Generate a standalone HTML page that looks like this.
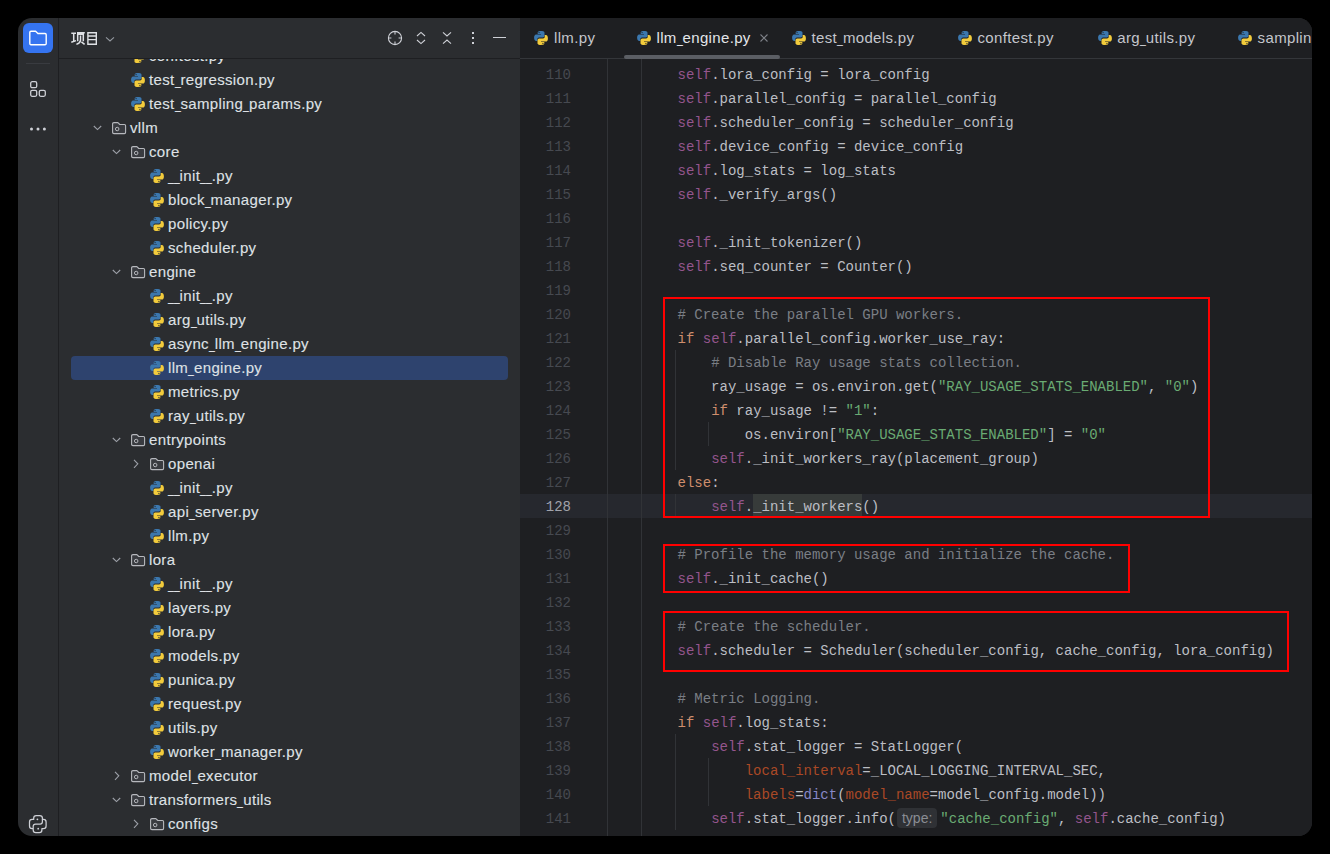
<!DOCTYPE html>
<html><head><meta charset="utf-8"><style>
html,body{margin:0;padding:0;background:#000;width:1330px;height:854px;overflow:hidden}
#win{position:absolute;left:0;top:0;width:1330px;height:854px;clip-path:inset(18px 18px 18px 18px round 14px);background:#2B2D30}
.abs{position:absolute}
.u{display:inline-block;width:5.8px;transform:scaleX(0.7);transform-origin:0 0}
.tt,.tab{letter-spacing:0.35px}
.tt{position:absolute;height:24px;-webkit-text-stroke:0.12px #DFE1E5;line-height:24px;font-family:"Liberation Sans",sans-serif;font-size:15px;color:#DFE1E5;white-space:pre}
.tab{position:absolute;top:18px;height:40px;line-height:40px;font-family:"Liberation Sans",sans-serif;font-size:15px;color:#C4C6CC;white-space:pre}
.tab.act{color:#E4E6EA}
.ln{position:absolute;left:520px;width:51px;text-align:right;height:24px;line-height:24px;padding-top:1px;box-sizing:border-box;font-family:"Liberation Mono",monospace;font-size:14px;color:#464950}
.ln.cur{color:#A1A3AB}
.cl{position:absolute;left:610.3px;height:24px;line-height:24px;padding-top:1px;box-sizing:border-box;font-family:"Liberation Mono",monospace;font-size:14px;color:#BCBEC4;white-space:pre}
.s{color:#94558D} .k{color:#CF8E6D} .g{color:#6AAB73} .c{color:#7A7E85} .n{color:#AA4926} .b{color:#8888C6}
.h{background:#373B3A;display:inline-block;height:24px;vertical-align:top;position:relative;top:-1px;padding-top:1px;box-sizing:border-box;line-height:24px}
.i{display:inline-block;font-family:"Liberation Sans",sans-serif;font-size:14px;color:#8A8D94;background:#2F3135;border-radius:4px;height:20px;line-height:20px;padding:0 5px;margin:0 3px 0 1px;vertical-align:top;margin-top:1px}
</style></head><body>
<div id="win">
  <!-- editor bg -->
  <div class="abs" style="left:520px;top:18px;width:792px;height:818px;background:#1E1F22"></div>
  <!-- tab border -->
  <div class="abs" style="left:520px;top:58px;width:792px;height:1px;background:#34363A"></div>
  <div class="abs" style="left:624px;top:55px;width:156px;height:4px;background:#5B5E64;border-radius:2px"></div>
  <svg width="14" height="14" viewBox="0.8 0.6 14.4 14.8" preserveAspectRatio="none" style="position:absolute;left:534px;top:31px"><path fill="#3B77AE" d="M7.9 0.6C4.4 0.6 4.6 2.1 4.6 2.1V3.7H8V4.2H3.3C3.3 4.2 0.9 3.9 0.9 7.6C0.9 11.3 3 11.2 3 11.2H4.2V9.4C4.2 9.4 4.1 7.4 6.2 7.4H9.6C9.6 7.4 11.6 7.4 11.6 5.5V2.4C11.6 2.4 11.9 0.6 7.9 0.6Z"/><circle cx="6" cy="2.3" r="0.6" fill="#1E1F22"/><path fill="#F2CB3C" d="M8.1 15.4C11.6 15.4 11.4 13.9 11.4 13.9V12.3H8V11.8H12.7C12.7 11.8 15.1 12.1 15.1 8.4C15.1 4.7 13 4.8 13 4.8H11.8V6.6C11.8 6.6 11.9 8.6 9.8 8.6H6.4C6.4 8.6 4.4 8.6 4.4 10.5V13.6C4.4 13.6 4.1 15.4 8.1 15.4Z"/><circle cx="10" cy="13.7" r="0.6" fill="#1E1F22"/></svg><div class="tab" style="left:554px">llm.py</div><svg width="14" height="14" viewBox="0.8 0.6 14.4 14.8" preserveAspectRatio="none" style="position:absolute;left:637px;top:31px"><path fill="#3B77AE" d="M7.9 0.6C4.4 0.6 4.6 2.1 4.6 2.1V3.7H8V4.2H3.3C3.3 4.2 0.9 3.9 0.9 7.6C0.9 11.3 3 11.2 3 11.2H4.2V9.4C4.2 9.4 4.1 7.4 6.2 7.4H9.6C9.6 7.4 11.6 7.4 11.6 5.5V2.4C11.6 2.4 11.9 0.6 7.9 0.6Z"/><circle cx="6" cy="2.3" r="0.6" fill="#1E1F22"/><path fill="#F2CB3C" d="M8.1 15.4C11.6 15.4 11.4 13.9 11.4 13.9V12.3H8V11.8H12.7C12.7 11.8 15.1 12.1 15.1 8.4C15.1 4.7 13 4.8 13 4.8H11.8V6.6C11.8 6.6 11.9 8.6 9.8 8.6H6.4C6.4 8.6 4.4 8.6 4.4 10.5V13.6C4.4 13.6 4.1 15.4 8.1 15.4Z"/><circle cx="10" cy="13.7" r="0.6" fill="#1E1F22"/></svg><div class="tab act" style="left:656.5px">llm<span class="u">_</span>engine.py</div><svg width="14" height="14" viewBox="0.8 0.6 14.4 14.8" preserveAspectRatio="none" style="position:absolute;left:792px;top:31px"><path fill="#3B77AE" d="M7.9 0.6C4.4 0.6 4.6 2.1 4.6 2.1V3.7H8V4.2H3.3C3.3 4.2 0.9 3.9 0.9 7.6C0.9 11.3 3 11.2 3 11.2H4.2V9.4C4.2 9.4 4.1 7.4 6.2 7.4H9.6C9.6 7.4 11.6 7.4 11.6 5.5V2.4C11.6 2.4 11.9 0.6 7.9 0.6Z"/><circle cx="6" cy="2.3" r="0.6" fill="#1E1F22"/><path fill="#F2CB3C" d="M8.1 15.4C11.6 15.4 11.4 13.9 11.4 13.9V12.3H8V11.8H12.7C12.7 11.8 15.1 12.1 15.1 8.4C15.1 4.7 13 4.8 13 4.8H11.8V6.6C11.8 6.6 11.9 8.6 9.8 8.6H6.4C6.4 8.6 4.4 8.6 4.4 10.5V13.6C4.4 13.6 4.1 15.4 8.1 15.4Z"/><circle cx="10" cy="13.7" r="0.6" fill="#1E1F22"/></svg><div class="tab" style="left:811.5px">test<span class="u">_</span>models.py</div><svg width="14" height="14" viewBox="0.8 0.6 14.4 14.8" preserveAspectRatio="none" style="position:absolute;left:958px;top:31px"><path fill="#3B77AE" d="M7.9 0.6C4.4 0.6 4.6 2.1 4.6 2.1V3.7H8V4.2H3.3C3.3 4.2 0.9 3.9 0.9 7.6C0.9 11.3 3 11.2 3 11.2H4.2V9.4C4.2 9.4 4.1 7.4 6.2 7.4H9.6C9.6 7.4 11.6 7.4 11.6 5.5V2.4C11.6 2.4 11.9 0.6 7.9 0.6Z"/><circle cx="6" cy="2.3" r="0.6" fill="#1E1F22"/><path fill="#F2CB3C" d="M8.1 15.4C11.6 15.4 11.4 13.9 11.4 13.9V12.3H8V11.8H12.7C12.7 11.8 15.1 12.1 15.1 8.4C15.1 4.7 13 4.8 13 4.8H11.8V6.6C11.8 6.6 11.9 8.6 9.8 8.6H6.4C6.4 8.6 4.4 8.6 4.4 10.5V13.6C4.4 13.6 4.1 15.4 8.1 15.4Z"/><circle cx="10" cy="13.7" r="0.6" fill="#1E1F22"/></svg><div class="tab" style="left:977.5px">conftest.py</div><svg width="14" height="14" viewBox="0.8 0.6 14.4 14.8" preserveAspectRatio="none" style="position:absolute;left:1098px;top:31px"><path fill="#3B77AE" d="M7.9 0.6C4.4 0.6 4.6 2.1 4.6 2.1V3.7H8V4.2H3.3C3.3 4.2 0.9 3.9 0.9 7.6C0.9 11.3 3 11.2 3 11.2H4.2V9.4C4.2 9.4 4.1 7.4 6.2 7.4H9.6C9.6 7.4 11.6 7.4 11.6 5.5V2.4C11.6 2.4 11.9 0.6 7.9 0.6Z"/><circle cx="6" cy="2.3" r="0.6" fill="#1E1F22"/><path fill="#F2CB3C" d="M8.1 15.4C11.6 15.4 11.4 13.9 11.4 13.9V12.3H8V11.8H12.7C12.7 11.8 15.1 12.1 15.1 8.4C15.1 4.7 13 4.8 13 4.8H11.8V6.6C11.8 6.6 11.9 8.6 9.8 8.6H6.4C6.4 8.6 4.4 8.6 4.4 10.5V13.6C4.4 13.6 4.1 15.4 8.1 15.4Z"/><circle cx="10" cy="13.7" r="0.6" fill="#1E1F22"/></svg><div class="tab" style="left:1117.3px">arg<span class="u">_</span>utils.py</div><svg width="14" height="14" viewBox="0.8 0.6 14.4 14.8" preserveAspectRatio="none" style="position:absolute;left:1238px;top:31px"><path fill="#3B77AE" d="M7.9 0.6C4.4 0.6 4.6 2.1 4.6 2.1V3.7H8V4.2H3.3C3.3 4.2 0.9 3.9 0.9 7.6C0.9 11.3 3 11.2 3 11.2H4.2V9.4C4.2 9.4 4.1 7.4 6.2 7.4H9.6C9.6 7.4 11.6 7.4 11.6 5.5V2.4C11.6 2.4 11.9 0.6 7.9 0.6Z"/><circle cx="6" cy="2.3" r="0.6" fill="#1E1F22"/><path fill="#F2CB3C" d="M8.1 15.4C11.6 15.4 11.4 13.9 11.4 13.9V12.3H8V11.8H12.7C12.7 11.8 15.1 12.1 15.1 8.4C15.1 4.7 13 4.8 13 4.8H11.8V6.6C11.8 6.6 11.9 8.6 9.8 8.6H6.4C6.4 8.6 4.4 8.6 4.4 10.5V13.6C4.4 13.6 4.1 15.4 8.1 15.4Z"/><circle cx="10" cy="13.7" r="0.6" fill="#1E1F22"/></svg><div class="tab" style="left:1257.6px">sampling<span class="u">_</span>params.py</div>
  <svg class="abs" style="left:759px;top:33px" width="10" height="10" viewBox="0 0 10 10"><path d="M1.5 1.5L8.5 8.5M8.5 1.5L1.5 8.5" stroke="#7C7F86" stroke-width="1.1"/></svg>
  <!-- current line -->
  <div class="abs" style="left:520px;top:494px;width:792px;height:24px;background:#26282E"></div>
  <!-- gutter sep -->
  <div class="abs" style="left:607px;top:59px;width:1px;height:777px;background:#313337"></div>
  <div class="abs" style="left:641px;top:59px;width:1px;height:777px;background:#313337"></div>
  <div class="abs" style="left:675px;top:350px;width:1px;height:120px;background:#313337"></div>
  <div class="abs" style="left:675px;top:494px;width:1px;height:24px;background:#313337"></div>
  <div class="abs" style="left:708px;top:422px;width:1px;height:24px;background:#313337"></div>
  <div class="abs" style="left:675px;top:734px;width:1px;height:96px;background:#313337"></div>
  <div class="abs" style="left:708px;top:758px;width:1px;height:48px;background:#313337"></div>
  <div class="ln" style="top:62px">110</div><div class="ln" style="top:86px">111</div><div class="ln" style="top:110px">112</div><div class="ln" style="top:134px">113</div><div class="ln" style="top:158px">114</div><div class="ln" style="top:182px">115</div><div class="ln" style="top:206px">116</div><div class="ln" style="top:230px">117</div><div class="ln" style="top:254px">118</div><div class="ln" style="top:278px">119</div><div class="ln" style="top:302px">120</div><div class="ln" style="top:326px">121</div><div class="ln" style="top:350px">122</div><div class="ln" style="top:374px">123</div><div class="ln" style="top:398px">124</div><div class="ln" style="top:422px">125</div><div class="ln" style="top:446px">126</div><div class="ln" style="top:470px">127</div><div class="ln cur" style="top:494px">128</div><div class="ln" style="top:518px">129</div><div class="ln" style="top:542px">130</div><div class="ln" style="top:566px">131</div><div class="ln" style="top:590px">132</div><div class="ln" style="top:614px">133</div><div class="ln" style="top:638px">134</div><div class="ln" style="top:662px">135</div><div class="ln" style="top:686px">136</div><div class="ln" style="top:710px">137</div><div class="ln" style="top:734px">138</div><div class="ln" style="top:758px">139</div><div class="ln" style="top:782px">140</div><div class="ln" style="top:806px">141</div>
  <div class="cl" style="top:62px">        <span class="s">self</span>.lora_config = lora_config</div><div class="cl" style="top:86px">        <span class="s">self</span>.parallel_config = parallel_config</div><div class="cl" style="top:110px">        <span class="s">self</span>.scheduler_config = scheduler_config</div><div class="cl" style="top:134px">        <span class="s">self</span>.device_config = device_config</div><div class="cl" style="top:158px">        <span class="s">self</span>.log_stats = log_stats</div><div class="cl" style="top:182px">        <span class="s">self</span>._verify_args()</div><div class="cl" style="top:230px">        <span class="s">self</span>._init_tokenizer()</div><div class="cl" style="top:254px">        <span class="s">self</span>.seq_counter = Counter()</div><div class="cl" style="top:302px">        <span class="c"># Create the parallel GPU workers.</span></div><div class="cl" style="top:326px">        <span class="k">if </span><span class="s">self</span>.parallel_config.worker_use_ray:</div><div class="cl" style="top:350px">            <span class="c"># Disable Ray usage stats collection.</span></div><div class="cl" style="top:374px">            ray_usage = os.environ.get(<span class="g">&quot;RAY_USAGE_STATS_ENABLED&quot;</span>, <span class="g">&quot;0&quot;</span>)</div><div class="cl" style="top:398px">            <span class="k">if</span> ray_usage != <span class="g">&quot;1&quot;</span>:</div><div class="cl" style="top:422px">                os.environ[<span class="g">&quot;RAY_USAGE_STATS_ENABLED&quot;</span>] = <span class="g">&quot;0&quot;</span></div><div class="cl" style="top:446px">            <span class="s">self</span>._init_workers_ray(placement_group)</div><div class="cl" style="top:470px">        <span class="k">else</span>:</div><div class="cl" style="top:494px">            <span class="s">self</span>.<span class="h">_init_workers</span>()</div><div class="cl" style="top:542px">        <span class="c"># Profile the memory usage and initialize the cache.</span></div><div class="cl" style="top:566px">        <span class="s">self</span>._init_cache()</div><div class="cl" style="top:614px">        <span class="c"># Create the scheduler.</span></div><div class="cl" style="top:638px">        <span class="s">self</span>.scheduler = Scheduler(scheduler_config, cache_config, lora_config)</div><div class="cl" style="top:686px">        <span class="c"># Metric Logging.</span></div><div class="cl" style="top:710px">        <span class="k">if </span><span class="s">self</span>.log_stats:</div><div class="cl" style="top:734px">            <span class="s">self</span>.stat_logger = StatLogger(</div><div class="cl" style="top:758px">                <span class="n">local_interval</span>=_LOCAL_LOGGING_INTERVAL_SEC,</div><div class="cl" style="top:782px">                <span class="n">labels</span>=<span class="b">dict</span>(<span class="n">model_name</span>=model_config.model))</div><div class="cl" style="top:806px">            <span class="s">self</span>.stat_logger.info(<span class="i">type:</span><span class="g">&quot;cache_config&quot;</span>, <span class="s">self</span>.cache_config)</div>
  <!-- red boxes -->
  <div class="abs" style="left:663px;top:297px;width:543px;height:217px;border:2px solid #FF0000"></div>
  <div class="abs" style="left:663px;top:544px;width:463px;height:45px;border:2px solid #FF0000"></div>
  <div class="abs" style="left:663px;top:611px;width:622px;height:57px;border:2px solid #FF0000"></div>

  <!-- left toolbar -->
  <div class="abs" style="left:58px;top:18px;width:1px;height:818px;background:#1E1F22"></div>
  <div class="abs" style="left:23px;top:23px;width:30px;height:30px;background:#3574F0;border-radius:6px"></div>
  <svg class="abs" style="left:28px;top:29px" width="20" height="18" viewBox="0 0 20 18"><path d="M1.8 3.4 Q1.8 2.2 3 2.2 H7.6 L9.9 4.5 H17 Q18.2 4.5 18.2 5.7 V14.6 Q18.2 15.8 17 15.8 H3 Q1.8 15.8 1.8 14.6 Z" fill="none" stroke="#FFFFFF" stroke-width="1.4" stroke-linejoin="round"/></svg>
  <div class="abs" style="left:26px;top:63px;width:24px;height:1px;background:#393B40"></div>
  <svg class="abs" style="left:29px;top:80px" width="18" height="18" viewBox="0 0 18 18"><g fill="none" stroke="#CED0D6" stroke-width="1.3"><rect x="1.7" y="1.7" width="6" height="6" rx="1.5"/><rect x="1.7" y="10.3" width="6" height="6" rx="1.5"/><rect x="10.3" y="10.3" width="6" height="6" rx="1.5"/></g></svg>
  <svg class="abs" style="left:28px;top:126px" width="20" height="6" viewBox="0 0 20 6"><g fill="#CED0D6"><circle cx="3.5" cy="3" r="1.5"/><circle cx="10" cy="3" r="1.5"/><circle cx="16.4" cy="3" r="1.5"/></g></svg>
  <svg class="abs" style="left:28px;top:814px" width="20" height="20" viewBox="0 0 20 20"><g fill="none" stroke="#CED0D6" stroke-width="1.25" stroke-linejoin="round"><path d="M8.2 1.5H11.8Q14.4 1.5 14.4 4.1V5.4H15.5Q18.1 5.4 18.1 8V12Q18.1 14.6 15.5 14.6H13.9V15.9Q13.9 18.5 11.3 18.5H7.8Q5.2 18.5 5.2 15.9V14.6H4.1Q1.5 14.6 1.5 12V8Q1.5 5.4 4.1 5.4H5.7V4.1Q5.7 1.5 8.2 1.5Z"/><path d="M5.2 14.6V12.3Q5.2 10 7.5 10H12.1Q14.4 10 14.4 7.7V5.4"/></g><circle cx="9.4" cy="5.3" r="0.9" fill="#CED0D6"/><circle cx="10.2" cy="14.7" r="0.9" fill="#CED0D6"/></svg>

  <!-- project panel -->
  <div class="abs" style="left:59px;top:59px;width:461px;height:777px;overflow:hidden">
    <div class="abs" style="left:-59px;top:-59px;width:520px;height:900px">
    <svg width="14" height="14" viewBox="0.8 0.6 14.4 14.8" preserveAspectRatio="none" style="position:absolute;left:131px;top:49px"><path fill="#3B77AE" d="M7.9 0.6C4.4 0.6 4.6 2.1 4.6 2.1V3.7H8V4.2H3.3C3.3 4.2 0.9 3.9 0.9 7.6C0.9 11.3 3 11.2 3 11.2H4.2V9.4C4.2 9.4 4.1 7.4 6.2 7.4H9.6C9.6 7.4 11.6 7.4 11.6 5.5V2.4C11.6 2.4 11.9 0.6 7.9 0.6Z"/><circle cx="6" cy="2.3" r="0.6" fill="#1E1F22"/><path fill="#F2CB3C" d="M8.1 15.4C11.6 15.4 11.4 13.9 11.4 13.9V12.3H8V11.8H12.7C12.7 11.8 15.1 12.1 15.1 8.4C15.1 4.7 13 4.8 13 4.8H11.8V6.6C11.8 6.6 11.9 8.6 9.8 8.6H6.4C6.4 8.6 4.4 8.6 4.4 10.5V13.6C4.4 13.6 4.1 15.4 8.1 15.4Z"/><circle cx="10" cy="13.7" r="0.6" fill="#1E1F22"/></svg><div class="tt" style="left:149px;top:44px">conftest.py</div><svg width="14" height="14" viewBox="0.8 0.6 14.4 14.8" preserveAspectRatio="none" style="position:absolute;left:131px;top:73px"><path fill="#3B77AE" d="M7.9 0.6C4.4 0.6 4.6 2.1 4.6 2.1V3.7H8V4.2H3.3C3.3 4.2 0.9 3.9 0.9 7.6C0.9 11.3 3 11.2 3 11.2H4.2V9.4C4.2 9.4 4.1 7.4 6.2 7.4H9.6C9.6 7.4 11.6 7.4 11.6 5.5V2.4C11.6 2.4 11.9 0.6 7.9 0.6Z"/><circle cx="6" cy="2.3" r="0.6" fill="#1E1F22"/><path fill="#F2CB3C" d="M8.1 15.4C11.6 15.4 11.4 13.9 11.4 13.9V12.3H8V11.8H12.7C12.7 11.8 15.1 12.1 15.1 8.4C15.1 4.7 13 4.8 13 4.8H11.8V6.6C11.8 6.6 11.9 8.6 9.8 8.6H6.4C6.4 8.6 4.4 8.6 4.4 10.5V13.6C4.4 13.6 4.1 15.4 8.1 15.4Z"/><circle cx="10" cy="13.7" r="0.6" fill="#1E1F22"/></svg><div class="tt" style="left:149px;top:68px">test<span class="u">_</span>regression.py</div><svg width="14" height="14" viewBox="0.8 0.6 14.4 14.8" preserveAspectRatio="none" style="position:absolute;left:131px;top:97px"><path fill="#3B77AE" d="M7.9 0.6C4.4 0.6 4.6 2.1 4.6 2.1V3.7H8V4.2H3.3C3.3 4.2 0.9 3.9 0.9 7.6C0.9 11.3 3 11.2 3 11.2H4.2V9.4C4.2 9.4 4.1 7.4 6.2 7.4H9.6C9.6 7.4 11.6 7.4 11.6 5.5V2.4C11.6 2.4 11.9 0.6 7.9 0.6Z"/><circle cx="6" cy="2.3" r="0.6" fill="#1E1F22"/><path fill="#F2CB3C" d="M8.1 15.4C11.6 15.4 11.4 13.9 11.4 13.9V12.3H8V11.8H12.7C12.7 11.8 15.1 12.1 15.1 8.4C15.1 4.7 13 4.8 13 4.8H11.8V6.6C11.8 6.6 11.9 8.6 9.8 8.6H6.4C6.4 8.6 4.4 8.6 4.4 10.5V13.6C4.4 13.6 4.1 15.4 8.1 15.4Z"/><circle cx="10" cy="13.7" r="0.6" fill="#1E1F22"/></svg><div class="tt" style="left:149px;top:92px">test<span class="u">_</span>sampling<span class="u">_</span>params.py</div><svg width="10" height="6" viewBox="0 0 10 6" style="position:absolute;left:93px;top:125px"><path d="M0.8 1 L4.5 4.6 L8.2 1" fill="none" stroke="#9DA0A8" stroke-width="1.1"/></svg><svg width="15" height="13" viewBox="0 0 15 13" style="position:absolute;left:112px;top:122px"><path d="M0.6 2 Q0.6 0.6 2 0.6 H5.9 L7.8 2.5 H12.4 Q13.6 2.5 13.6 3.7 V10.3 Q13.6 11.6 12.4 11.6 H2 Q0.6 11.6 0.6 10.3 Z" fill="#393B40" stroke="#B6B8BD" stroke-width="1.1" stroke-linejoin="round"/><circle cx="5.2" cy="7" r="1.75" fill="none" stroke="#B6B8BD" stroke-width="1"/></svg><div class="tt" style="left:130px;top:116px">vllm</div><svg width="10" height="6" viewBox="0 0 10 6" style="position:absolute;left:112px;top:149px"><path d="M0.8 1 L4.5 4.6 L8.2 1" fill="none" stroke="#9DA0A8" stroke-width="1.1"/></svg><svg width="15" height="13" viewBox="0 0 15 13" style="position:absolute;left:131px;top:146px"><path d="M0.6 2 Q0.6 0.6 2 0.6 H5.9 L7.8 2.5 H12.4 Q13.6 2.5 13.6 3.7 V10.3 Q13.6 11.6 12.4 11.6 H2 Q0.6 11.6 0.6 10.3 Z" fill="#393B40" stroke="#B6B8BD" stroke-width="1.1" stroke-linejoin="round"/><circle cx="5.2" cy="7" r="1.75" fill="none" stroke="#B6B8BD" stroke-width="1"/></svg><div class="tt" style="left:149px;top:140px">core</div><svg width="14" height="14" viewBox="0.8 0.6 14.4 14.8" preserveAspectRatio="none" style="position:absolute;left:150px;top:169px"><path fill="#3B77AE" d="M7.9 0.6C4.4 0.6 4.6 2.1 4.6 2.1V3.7H8V4.2H3.3C3.3 4.2 0.9 3.9 0.9 7.6C0.9 11.3 3 11.2 3 11.2H4.2V9.4C4.2 9.4 4.1 7.4 6.2 7.4H9.6C9.6 7.4 11.6 7.4 11.6 5.5V2.4C11.6 2.4 11.9 0.6 7.9 0.6Z"/><circle cx="6" cy="2.3" r="0.6" fill="#1E1F22"/><path fill="#F2CB3C" d="M8.1 15.4C11.6 15.4 11.4 13.9 11.4 13.9V12.3H8V11.8H12.7C12.7 11.8 15.1 12.1 15.1 8.4C15.1 4.7 13 4.8 13 4.8H11.8V6.6C11.8 6.6 11.9 8.6 9.8 8.6H6.4C6.4 8.6 4.4 8.6 4.4 10.5V13.6C4.4 13.6 4.1 15.4 8.1 15.4Z"/><circle cx="10" cy="13.7" r="0.6" fill="#1E1F22"/></svg><div class="tt" style="left:168px;top:164px"><span class="u">_</span><span class="u">_</span>init<span class="u">_</span><span class="u">_</span>.py</div><svg width="14" height="14" viewBox="0.8 0.6 14.4 14.8" preserveAspectRatio="none" style="position:absolute;left:150px;top:193px"><path fill="#3B77AE" d="M7.9 0.6C4.4 0.6 4.6 2.1 4.6 2.1V3.7H8V4.2H3.3C3.3 4.2 0.9 3.9 0.9 7.6C0.9 11.3 3 11.2 3 11.2H4.2V9.4C4.2 9.4 4.1 7.4 6.2 7.4H9.6C9.6 7.4 11.6 7.4 11.6 5.5V2.4C11.6 2.4 11.9 0.6 7.9 0.6Z"/><circle cx="6" cy="2.3" r="0.6" fill="#1E1F22"/><path fill="#F2CB3C" d="M8.1 15.4C11.6 15.4 11.4 13.9 11.4 13.9V12.3H8V11.8H12.7C12.7 11.8 15.1 12.1 15.1 8.4C15.1 4.7 13 4.8 13 4.8H11.8V6.6C11.8 6.6 11.9 8.6 9.8 8.6H6.4C6.4 8.6 4.4 8.6 4.4 10.5V13.6C4.4 13.6 4.1 15.4 8.1 15.4Z"/><circle cx="10" cy="13.7" r="0.6" fill="#1E1F22"/></svg><div class="tt" style="left:168px;top:188px">block<span class="u">_</span>manager.py</div><svg width="14" height="14" viewBox="0.8 0.6 14.4 14.8" preserveAspectRatio="none" style="position:absolute;left:150px;top:217px"><path fill="#3B77AE" d="M7.9 0.6C4.4 0.6 4.6 2.1 4.6 2.1V3.7H8V4.2H3.3C3.3 4.2 0.9 3.9 0.9 7.6C0.9 11.3 3 11.2 3 11.2H4.2V9.4C4.2 9.4 4.1 7.4 6.2 7.4H9.6C9.6 7.4 11.6 7.4 11.6 5.5V2.4C11.6 2.4 11.9 0.6 7.9 0.6Z"/><circle cx="6" cy="2.3" r="0.6" fill="#1E1F22"/><path fill="#F2CB3C" d="M8.1 15.4C11.6 15.4 11.4 13.9 11.4 13.9V12.3H8V11.8H12.7C12.7 11.8 15.1 12.1 15.1 8.4C15.1 4.7 13 4.8 13 4.8H11.8V6.6C11.8 6.6 11.9 8.6 9.8 8.6H6.4C6.4 8.6 4.4 8.6 4.4 10.5V13.6C4.4 13.6 4.1 15.4 8.1 15.4Z"/><circle cx="10" cy="13.7" r="0.6" fill="#1E1F22"/></svg><div class="tt" style="left:168px;top:212px">policy.py</div><svg width="14" height="14" viewBox="0.8 0.6 14.4 14.8" preserveAspectRatio="none" style="position:absolute;left:150px;top:241px"><path fill="#3B77AE" d="M7.9 0.6C4.4 0.6 4.6 2.1 4.6 2.1V3.7H8V4.2H3.3C3.3 4.2 0.9 3.9 0.9 7.6C0.9 11.3 3 11.2 3 11.2H4.2V9.4C4.2 9.4 4.1 7.4 6.2 7.4H9.6C9.6 7.4 11.6 7.4 11.6 5.5V2.4C11.6 2.4 11.9 0.6 7.9 0.6Z"/><circle cx="6" cy="2.3" r="0.6" fill="#1E1F22"/><path fill="#F2CB3C" d="M8.1 15.4C11.6 15.4 11.4 13.9 11.4 13.9V12.3H8V11.8H12.7C12.7 11.8 15.1 12.1 15.1 8.4C15.1 4.7 13 4.8 13 4.8H11.8V6.6C11.8 6.6 11.9 8.6 9.8 8.6H6.4C6.4 8.6 4.4 8.6 4.4 10.5V13.6C4.4 13.6 4.1 15.4 8.1 15.4Z"/><circle cx="10" cy="13.7" r="0.6" fill="#1E1F22"/></svg><div class="tt" style="left:168px;top:236px">scheduler.py</div><svg width="10" height="6" viewBox="0 0 10 6" style="position:absolute;left:112px;top:269px"><path d="M0.8 1 L4.5 4.6 L8.2 1" fill="none" stroke="#9DA0A8" stroke-width="1.1"/></svg><svg width="15" height="13" viewBox="0 0 15 13" style="position:absolute;left:131px;top:266px"><path d="M0.6 2 Q0.6 0.6 2 0.6 H5.9 L7.8 2.5 H12.4 Q13.6 2.5 13.6 3.7 V10.3 Q13.6 11.6 12.4 11.6 H2 Q0.6 11.6 0.6 10.3 Z" fill="#393B40" stroke="#B6B8BD" stroke-width="1.1" stroke-linejoin="round"/><circle cx="5.2" cy="7" r="1.75" fill="none" stroke="#B6B8BD" stroke-width="1"/></svg><div class="tt" style="left:149px;top:260px">engine</div><svg width="14" height="14" viewBox="0.8 0.6 14.4 14.8" preserveAspectRatio="none" style="position:absolute;left:150px;top:289px"><path fill="#3B77AE" d="M7.9 0.6C4.4 0.6 4.6 2.1 4.6 2.1V3.7H8V4.2H3.3C3.3 4.2 0.9 3.9 0.9 7.6C0.9 11.3 3 11.2 3 11.2H4.2V9.4C4.2 9.4 4.1 7.4 6.2 7.4H9.6C9.6 7.4 11.6 7.4 11.6 5.5V2.4C11.6 2.4 11.9 0.6 7.9 0.6Z"/><circle cx="6" cy="2.3" r="0.6" fill="#1E1F22"/><path fill="#F2CB3C" d="M8.1 15.4C11.6 15.4 11.4 13.9 11.4 13.9V12.3H8V11.8H12.7C12.7 11.8 15.1 12.1 15.1 8.4C15.1 4.7 13 4.8 13 4.8H11.8V6.6C11.8 6.6 11.9 8.6 9.8 8.6H6.4C6.4 8.6 4.4 8.6 4.4 10.5V13.6C4.4 13.6 4.1 15.4 8.1 15.4Z"/><circle cx="10" cy="13.7" r="0.6" fill="#1E1F22"/></svg><div class="tt" style="left:168px;top:284px"><span class="u">_</span><span class="u">_</span>init<span class="u">_</span><span class="u">_</span>.py</div><svg width="14" height="14" viewBox="0.8 0.6 14.4 14.8" preserveAspectRatio="none" style="position:absolute;left:150px;top:313px"><path fill="#3B77AE" d="M7.9 0.6C4.4 0.6 4.6 2.1 4.6 2.1V3.7H8V4.2H3.3C3.3 4.2 0.9 3.9 0.9 7.6C0.9 11.3 3 11.2 3 11.2H4.2V9.4C4.2 9.4 4.1 7.4 6.2 7.4H9.6C9.6 7.4 11.6 7.4 11.6 5.5V2.4C11.6 2.4 11.9 0.6 7.9 0.6Z"/><circle cx="6" cy="2.3" r="0.6" fill="#1E1F22"/><path fill="#F2CB3C" d="M8.1 15.4C11.6 15.4 11.4 13.9 11.4 13.9V12.3H8V11.8H12.7C12.7 11.8 15.1 12.1 15.1 8.4C15.1 4.7 13 4.8 13 4.8H11.8V6.6C11.8 6.6 11.9 8.6 9.8 8.6H6.4C6.4 8.6 4.4 8.6 4.4 10.5V13.6C4.4 13.6 4.1 15.4 8.1 15.4Z"/><circle cx="10" cy="13.7" r="0.6" fill="#1E1F22"/></svg><div class="tt" style="left:168px;top:308px">arg<span class="u">_</span>utils.py</div><svg width="14" height="14" viewBox="0.8 0.6 14.4 14.8" preserveAspectRatio="none" style="position:absolute;left:150px;top:337px"><path fill="#3B77AE" d="M7.9 0.6C4.4 0.6 4.6 2.1 4.6 2.1V3.7H8V4.2H3.3C3.3 4.2 0.9 3.9 0.9 7.6C0.9 11.3 3 11.2 3 11.2H4.2V9.4C4.2 9.4 4.1 7.4 6.2 7.4H9.6C9.6 7.4 11.6 7.4 11.6 5.5V2.4C11.6 2.4 11.9 0.6 7.9 0.6Z"/><circle cx="6" cy="2.3" r="0.6" fill="#1E1F22"/><path fill="#F2CB3C" d="M8.1 15.4C11.6 15.4 11.4 13.9 11.4 13.9V12.3H8V11.8H12.7C12.7 11.8 15.1 12.1 15.1 8.4C15.1 4.7 13 4.8 13 4.8H11.8V6.6C11.8 6.6 11.9 8.6 9.8 8.6H6.4C6.4 8.6 4.4 8.6 4.4 10.5V13.6C4.4 13.6 4.1 15.4 8.1 15.4Z"/><circle cx="10" cy="13.7" r="0.6" fill="#1E1F22"/></svg><div class="tt" style="left:168px;top:332px">async<span class="u">_</span>llm<span class="u">_</span>engine.py</div><div style="position:absolute;left:71px;top:356px;width:437px;height:24px;background:#2E436E;border-radius:4px"></div><svg width="14" height="14" viewBox="0.8 0.6 14.4 14.8" preserveAspectRatio="none" style="position:absolute;left:150px;top:361px"><path fill="#3B77AE" d="M7.9 0.6C4.4 0.6 4.6 2.1 4.6 2.1V3.7H8V4.2H3.3C3.3 4.2 0.9 3.9 0.9 7.6C0.9 11.3 3 11.2 3 11.2H4.2V9.4C4.2 9.4 4.1 7.4 6.2 7.4H9.6C9.6 7.4 11.6 7.4 11.6 5.5V2.4C11.6 2.4 11.9 0.6 7.9 0.6Z"/><circle cx="6" cy="2.3" r="0.6" fill="#1E1F22"/><path fill="#F2CB3C" d="M8.1 15.4C11.6 15.4 11.4 13.9 11.4 13.9V12.3H8V11.8H12.7C12.7 11.8 15.1 12.1 15.1 8.4C15.1 4.7 13 4.8 13 4.8H11.8V6.6C11.8 6.6 11.9 8.6 9.8 8.6H6.4C6.4 8.6 4.4 8.6 4.4 10.5V13.6C4.4 13.6 4.1 15.4 8.1 15.4Z"/><circle cx="10" cy="13.7" r="0.6" fill="#1E1F22"/></svg><div class="tt" style="left:168px;top:356px">llm<span class="u">_</span>engine.py</div><svg width="14" height="14" viewBox="0.8 0.6 14.4 14.8" preserveAspectRatio="none" style="position:absolute;left:150px;top:385px"><path fill="#3B77AE" d="M7.9 0.6C4.4 0.6 4.6 2.1 4.6 2.1V3.7H8V4.2H3.3C3.3 4.2 0.9 3.9 0.9 7.6C0.9 11.3 3 11.2 3 11.2H4.2V9.4C4.2 9.4 4.1 7.4 6.2 7.4H9.6C9.6 7.4 11.6 7.4 11.6 5.5V2.4C11.6 2.4 11.9 0.6 7.9 0.6Z"/><circle cx="6" cy="2.3" r="0.6" fill="#1E1F22"/><path fill="#F2CB3C" d="M8.1 15.4C11.6 15.4 11.4 13.9 11.4 13.9V12.3H8V11.8H12.7C12.7 11.8 15.1 12.1 15.1 8.4C15.1 4.7 13 4.8 13 4.8H11.8V6.6C11.8 6.6 11.9 8.6 9.8 8.6H6.4C6.4 8.6 4.4 8.6 4.4 10.5V13.6C4.4 13.6 4.1 15.4 8.1 15.4Z"/><circle cx="10" cy="13.7" r="0.6" fill="#1E1F22"/></svg><div class="tt" style="left:168px;top:380px">metrics.py</div><svg width="14" height="14" viewBox="0.8 0.6 14.4 14.8" preserveAspectRatio="none" style="position:absolute;left:150px;top:409px"><path fill="#3B77AE" d="M7.9 0.6C4.4 0.6 4.6 2.1 4.6 2.1V3.7H8V4.2H3.3C3.3 4.2 0.9 3.9 0.9 7.6C0.9 11.3 3 11.2 3 11.2H4.2V9.4C4.2 9.4 4.1 7.4 6.2 7.4H9.6C9.6 7.4 11.6 7.4 11.6 5.5V2.4C11.6 2.4 11.9 0.6 7.9 0.6Z"/><circle cx="6" cy="2.3" r="0.6" fill="#1E1F22"/><path fill="#F2CB3C" d="M8.1 15.4C11.6 15.4 11.4 13.9 11.4 13.9V12.3H8V11.8H12.7C12.7 11.8 15.1 12.1 15.1 8.4C15.1 4.7 13 4.8 13 4.8H11.8V6.6C11.8 6.6 11.9 8.6 9.8 8.6H6.4C6.4 8.6 4.4 8.6 4.4 10.5V13.6C4.4 13.6 4.1 15.4 8.1 15.4Z"/><circle cx="10" cy="13.7" r="0.6" fill="#1E1F22"/></svg><div class="tt" style="left:168px;top:404px">ray<span class="u">_</span>utils.py</div><svg width="10" height="6" viewBox="0 0 10 6" style="position:absolute;left:112px;top:437px"><path d="M0.8 1 L4.5 4.6 L8.2 1" fill="none" stroke="#9DA0A8" stroke-width="1.1"/></svg><svg width="15" height="13" viewBox="0 0 15 13" style="position:absolute;left:131px;top:434px"><path d="M0.6 2 Q0.6 0.6 2 0.6 H5.9 L7.8 2.5 H12.4 Q13.6 2.5 13.6 3.7 V10.3 Q13.6 11.6 12.4 11.6 H2 Q0.6 11.6 0.6 10.3 Z" fill="#393B40" stroke="#B6B8BD" stroke-width="1.1" stroke-linejoin="round"/><circle cx="5.2" cy="7" r="1.75" fill="none" stroke="#B6B8BD" stroke-width="1"/></svg><div class="tt" style="left:149px;top:428px">entrypoints</div><svg width="6" height="10" viewBox="0 0 6 10" style="position:absolute;left:132.5px;top:459px"><path d="M1 0.8 L4.8 4.8 L1 8.8" fill="none" stroke="#9DA0A8" stroke-width="1.1"/></svg><svg width="15" height="13" viewBox="0 0 15 13" style="position:absolute;left:150px;top:458px"><path d="M0.6 2 Q0.6 0.6 2 0.6 H5.9 L7.8 2.5 H12.4 Q13.6 2.5 13.6 3.7 V10.3 Q13.6 11.6 12.4 11.6 H2 Q0.6 11.6 0.6 10.3 Z" fill="#393B40" stroke="#B6B8BD" stroke-width="1.1" stroke-linejoin="round"/><circle cx="5.2" cy="7" r="1.75" fill="none" stroke="#B6B8BD" stroke-width="1"/></svg><div class="tt" style="left:168px;top:452px">openai</div><svg width="14" height="14" viewBox="0.8 0.6 14.4 14.8" preserveAspectRatio="none" style="position:absolute;left:150px;top:481px"><path fill="#3B77AE" d="M7.9 0.6C4.4 0.6 4.6 2.1 4.6 2.1V3.7H8V4.2H3.3C3.3 4.2 0.9 3.9 0.9 7.6C0.9 11.3 3 11.2 3 11.2H4.2V9.4C4.2 9.4 4.1 7.4 6.2 7.4H9.6C9.6 7.4 11.6 7.4 11.6 5.5V2.4C11.6 2.4 11.9 0.6 7.9 0.6Z"/><circle cx="6" cy="2.3" r="0.6" fill="#1E1F22"/><path fill="#F2CB3C" d="M8.1 15.4C11.6 15.4 11.4 13.9 11.4 13.9V12.3H8V11.8H12.7C12.7 11.8 15.1 12.1 15.1 8.4C15.1 4.7 13 4.8 13 4.8H11.8V6.6C11.8 6.6 11.9 8.6 9.8 8.6H6.4C6.4 8.6 4.4 8.6 4.4 10.5V13.6C4.4 13.6 4.1 15.4 8.1 15.4Z"/><circle cx="10" cy="13.7" r="0.6" fill="#1E1F22"/></svg><div class="tt" style="left:168px;top:476px"><span class="u">_</span><span class="u">_</span>init<span class="u">_</span><span class="u">_</span>.py</div><svg width="14" height="14" viewBox="0.8 0.6 14.4 14.8" preserveAspectRatio="none" style="position:absolute;left:150px;top:505px"><path fill="#3B77AE" d="M7.9 0.6C4.4 0.6 4.6 2.1 4.6 2.1V3.7H8V4.2H3.3C3.3 4.2 0.9 3.9 0.9 7.6C0.9 11.3 3 11.2 3 11.2H4.2V9.4C4.2 9.4 4.1 7.4 6.2 7.4H9.6C9.6 7.4 11.6 7.4 11.6 5.5V2.4C11.6 2.4 11.9 0.6 7.9 0.6Z"/><circle cx="6" cy="2.3" r="0.6" fill="#1E1F22"/><path fill="#F2CB3C" d="M8.1 15.4C11.6 15.4 11.4 13.9 11.4 13.9V12.3H8V11.8H12.7C12.7 11.8 15.1 12.1 15.1 8.4C15.1 4.7 13 4.8 13 4.8H11.8V6.6C11.8 6.6 11.9 8.6 9.8 8.6H6.4C6.4 8.6 4.4 8.6 4.4 10.5V13.6C4.4 13.6 4.1 15.4 8.1 15.4Z"/><circle cx="10" cy="13.7" r="0.6" fill="#1E1F22"/></svg><div class="tt" style="left:168px;top:500px">api<span class="u">_</span>server.py</div><svg width="14" height="14" viewBox="0.8 0.6 14.4 14.8" preserveAspectRatio="none" style="position:absolute;left:150px;top:529px"><path fill="#3B77AE" d="M7.9 0.6C4.4 0.6 4.6 2.1 4.6 2.1V3.7H8V4.2H3.3C3.3 4.2 0.9 3.9 0.9 7.6C0.9 11.3 3 11.2 3 11.2H4.2V9.4C4.2 9.4 4.1 7.4 6.2 7.4H9.6C9.6 7.4 11.6 7.4 11.6 5.5V2.4C11.6 2.4 11.9 0.6 7.9 0.6Z"/><circle cx="6" cy="2.3" r="0.6" fill="#1E1F22"/><path fill="#F2CB3C" d="M8.1 15.4C11.6 15.4 11.4 13.9 11.4 13.9V12.3H8V11.8H12.7C12.7 11.8 15.1 12.1 15.1 8.4C15.1 4.7 13 4.8 13 4.8H11.8V6.6C11.8 6.6 11.9 8.6 9.8 8.6H6.4C6.4 8.6 4.4 8.6 4.4 10.5V13.6C4.4 13.6 4.1 15.4 8.1 15.4Z"/><circle cx="10" cy="13.7" r="0.6" fill="#1E1F22"/></svg><div class="tt" style="left:168px;top:524px">llm.py</div><svg width="10" height="6" viewBox="0 0 10 6" style="position:absolute;left:112px;top:557px"><path d="M0.8 1 L4.5 4.6 L8.2 1" fill="none" stroke="#9DA0A8" stroke-width="1.1"/></svg><svg width="15" height="13" viewBox="0 0 15 13" style="position:absolute;left:131px;top:554px"><path d="M0.6 2 Q0.6 0.6 2 0.6 H5.9 L7.8 2.5 H12.4 Q13.6 2.5 13.6 3.7 V10.3 Q13.6 11.6 12.4 11.6 H2 Q0.6 11.6 0.6 10.3 Z" fill="#393B40" stroke="#B6B8BD" stroke-width="1.1" stroke-linejoin="round"/><circle cx="5.2" cy="7" r="1.75" fill="none" stroke="#B6B8BD" stroke-width="1"/></svg><div class="tt" style="left:149px;top:548px">lora</div><svg width="14" height="14" viewBox="0.8 0.6 14.4 14.8" preserveAspectRatio="none" style="position:absolute;left:150px;top:577px"><path fill="#3B77AE" d="M7.9 0.6C4.4 0.6 4.6 2.1 4.6 2.1V3.7H8V4.2H3.3C3.3 4.2 0.9 3.9 0.9 7.6C0.9 11.3 3 11.2 3 11.2H4.2V9.4C4.2 9.4 4.1 7.4 6.2 7.4H9.6C9.6 7.4 11.6 7.4 11.6 5.5V2.4C11.6 2.4 11.9 0.6 7.9 0.6Z"/><circle cx="6" cy="2.3" r="0.6" fill="#1E1F22"/><path fill="#F2CB3C" d="M8.1 15.4C11.6 15.4 11.4 13.9 11.4 13.9V12.3H8V11.8H12.7C12.7 11.8 15.1 12.1 15.1 8.4C15.1 4.7 13 4.8 13 4.8H11.8V6.6C11.8 6.6 11.9 8.6 9.8 8.6H6.4C6.4 8.6 4.4 8.6 4.4 10.5V13.6C4.4 13.6 4.1 15.4 8.1 15.4Z"/><circle cx="10" cy="13.7" r="0.6" fill="#1E1F22"/></svg><div class="tt" style="left:168px;top:572px"><span class="u">_</span><span class="u">_</span>init<span class="u">_</span><span class="u">_</span>.py</div><svg width="14" height="14" viewBox="0.8 0.6 14.4 14.8" preserveAspectRatio="none" style="position:absolute;left:150px;top:601px"><path fill="#3B77AE" d="M7.9 0.6C4.4 0.6 4.6 2.1 4.6 2.1V3.7H8V4.2H3.3C3.3 4.2 0.9 3.9 0.9 7.6C0.9 11.3 3 11.2 3 11.2H4.2V9.4C4.2 9.4 4.1 7.4 6.2 7.4H9.6C9.6 7.4 11.6 7.4 11.6 5.5V2.4C11.6 2.4 11.9 0.6 7.9 0.6Z"/><circle cx="6" cy="2.3" r="0.6" fill="#1E1F22"/><path fill="#F2CB3C" d="M8.1 15.4C11.6 15.4 11.4 13.9 11.4 13.9V12.3H8V11.8H12.7C12.7 11.8 15.1 12.1 15.1 8.4C15.1 4.7 13 4.8 13 4.8H11.8V6.6C11.8 6.6 11.9 8.6 9.8 8.6H6.4C6.4 8.6 4.4 8.6 4.4 10.5V13.6C4.4 13.6 4.1 15.4 8.1 15.4Z"/><circle cx="10" cy="13.7" r="0.6" fill="#1E1F22"/></svg><div class="tt" style="left:168px;top:596px">layers.py</div><svg width="14" height="14" viewBox="0.8 0.6 14.4 14.8" preserveAspectRatio="none" style="position:absolute;left:150px;top:625px"><path fill="#3B77AE" d="M7.9 0.6C4.4 0.6 4.6 2.1 4.6 2.1V3.7H8V4.2H3.3C3.3 4.2 0.9 3.9 0.9 7.6C0.9 11.3 3 11.2 3 11.2H4.2V9.4C4.2 9.4 4.1 7.4 6.2 7.4H9.6C9.6 7.4 11.6 7.4 11.6 5.5V2.4C11.6 2.4 11.9 0.6 7.9 0.6Z"/><circle cx="6" cy="2.3" r="0.6" fill="#1E1F22"/><path fill="#F2CB3C" d="M8.1 15.4C11.6 15.4 11.4 13.9 11.4 13.9V12.3H8V11.8H12.7C12.7 11.8 15.1 12.1 15.1 8.4C15.1 4.7 13 4.8 13 4.8H11.8V6.6C11.8 6.6 11.9 8.6 9.8 8.6H6.4C6.4 8.6 4.4 8.6 4.4 10.5V13.6C4.4 13.6 4.1 15.4 8.1 15.4Z"/><circle cx="10" cy="13.7" r="0.6" fill="#1E1F22"/></svg><div class="tt" style="left:168px;top:620px">lora.py</div><svg width="14" height="14" viewBox="0.8 0.6 14.4 14.8" preserveAspectRatio="none" style="position:absolute;left:150px;top:649px"><path fill="#3B77AE" d="M7.9 0.6C4.4 0.6 4.6 2.1 4.6 2.1V3.7H8V4.2H3.3C3.3 4.2 0.9 3.9 0.9 7.6C0.9 11.3 3 11.2 3 11.2H4.2V9.4C4.2 9.4 4.1 7.4 6.2 7.4H9.6C9.6 7.4 11.6 7.4 11.6 5.5V2.4C11.6 2.4 11.9 0.6 7.9 0.6Z"/><circle cx="6" cy="2.3" r="0.6" fill="#1E1F22"/><path fill="#F2CB3C" d="M8.1 15.4C11.6 15.4 11.4 13.9 11.4 13.9V12.3H8V11.8H12.7C12.7 11.8 15.1 12.1 15.1 8.4C15.1 4.7 13 4.8 13 4.8H11.8V6.6C11.8 6.6 11.9 8.6 9.8 8.6H6.4C6.4 8.6 4.4 8.6 4.4 10.5V13.6C4.4 13.6 4.1 15.4 8.1 15.4Z"/><circle cx="10" cy="13.7" r="0.6" fill="#1E1F22"/></svg><div class="tt" style="left:168px;top:644px">models.py</div><svg width="14" height="14" viewBox="0.8 0.6 14.4 14.8" preserveAspectRatio="none" style="position:absolute;left:150px;top:673px"><path fill="#3B77AE" d="M7.9 0.6C4.4 0.6 4.6 2.1 4.6 2.1V3.7H8V4.2H3.3C3.3 4.2 0.9 3.9 0.9 7.6C0.9 11.3 3 11.2 3 11.2H4.2V9.4C4.2 9.4 4.1 7.4 6.2 7.4H9.6C9.6 7.4 11.6 7.4 11.6 5.5V2.4C11.6 2.4 11.9 0.6 7.9 0.6Z"/><circle cx="6" cy="2.3" r="0.6" fill="#1E1F22"/><path fill="#F2CB3C" d="M8.1 15.4C11.6 15.4 11.4 13.9 11.4 13.9V12.3H8V11.8H12.7C12.7 11.8 15.1 12.1 15.1 8.4C15.1 4.7 13 4.8 13 4.8H11.8V6.6C11.8 6.6 11.9 8.6 9.8 8.6H6.4C6.4 8.6 4.4 8.6 4.4 10.5V13.6C4.4 13.6 4.1 15.4 8.1 15.4Z"/><circle cx="10" cy="13.7" r="0.6" fill="#1E1F22"/></svg><div class="tt" style="left:168px;top:668px">punica.py</div><svg width="14" height="14" viewBox="0.8 0.6 14.4 14.8" preserveAspectRatio="none" style="position:absolute;left:150px;top:697px"><path fill="#3B77AE" d="M7.9 0.6C4.4 0.6 4.6 2.1 4.6 2.1V3.7H8V4.2H3.3C3.3 4.2 0.9 3.9 0.9 7.6C0.9 11.3 3 11.2 3 11.2H4.2V9.4C4.2 9.4 4.1 7.4 6.2 7.4H9.6C9.6 7.4 11.6 7.4 11.6 5.5V2.4C11.6 2.4 11.9 0.6 7.9 0.6Z"/><circle cx="6" cy="2.3" r="0.6" fill="#1E1F22"/><path fill="#F2CB3C" d="M8.1 15.4C11.6 15.4 11.4 13.9 11.4 13.9V12.3H8V11.8H12.7C12.7 11.8 15.1 12.1 15.1 8.4C15.1 4.7 13 4.8 13 4.8H11.8V6.6C11.8 6.6 11.9 8.6 9.8 8.6H6.4C6.4 8.6 4.4 8.6 4.4 10.5V13.6C4.4 13.6 4.1 15.4 8.1 15.4Z"/><circle cx="10" cy="13.7" r="0.6" fill="#1E1F22"/></svg><div class="tt" style="left:168px;top:692px">request.py</div><svg width="14" height="14" viewBox="0.8 0.6 14.4 14.8" preserveAspectRatio="none" style="position:absolute;left:150px;top:721px"><path fill="#3B77AE" d="M7.9 0.6C4.4 0.6 4.6 2.1 4.6 2.1V3.7H8V4.2H3.3C3.3 4.2 0.9 3.9 0.9 7.6C0.9 11.3 3 11.2 3 11.2H4.2V9.4C4.2 9.4 4.1 7.4 6.2 7.4H9.6C9.6 7.4 11.6 7.4 11.6 5.5V2.4C11.6 2.4 11.9 0.6 7.9 0.6Z"/><circle cx="6" cy="2.3" r="0.6" fill="#1E1F22"/><path fill="#F2CB3C" d="M8.1 15.4C11.6 15.4 11.4 13.9 11.4 13.9V12.3H8V11.8H12.7C12.7 11.8 15.1 12.1 15.1 8.4C15.1 4.7 13 4.8 13 4.8H11.8V6.6C11.8 6.6 11.9 8.6 9.8 8.6H6.4C6.4 8.6 4.4 8.6 4.4 10.5V13.6C4.4 13.6 4.1 15.4 8.1 15.4Z"/><circle cx="10" cy="13.7" r="0.6" fill="#1E1F22"/></svg><div class="tt" style="left:168px;top:716px">utils.py</div><svg width="14" height="14" viewBox="0.8 0.6 14.4 14.8" preserveAspectRatio="none" style="position:absolute;left:150px;top:745px"><path fill="#3B77AE" d="M7.9 0.6C4.4 0.6 4.6 2.1 4.6 2.1V3.7H8V4.2H3.3C3.3 4.2 0.9 3.9 0.9 7.6C0.9 11.3 3 11.2 3 11.2H4.2V9.4C4.2 9.4 4.1 7.4 6.2 7.4H9.6C9.6 7.4 11.6 7.4 11.6 5.5V2.4C11.6 2.4 11.9 0.6 7.9 0.6Z"/><circle cx="6" cy="2.3" r="0.6" fill="#1E1F22"/><path fill="#F2CB3C" d="M8.1 15.4C11.6 15.4 11.4 13.9 11.4 13.9V12.3H8V11.8H12.7C12.7 11.8 15.1 12.1 15.1 8.4C15.1 4.7 13 4.8 13 4.8H11.8V6.6C11.8 6.6 11.9 8.6 9.8 8.6H6.4C6.4 8.6 4.4 8.6 4.4 10.5V13.6C4.4 13.6 4.1 15.4 8.1 15.4Z"/><circle cx="10" cy="13.7" r="0.6" fill="#1E1F22"/></svg><div class="tt" style="left:168px;top:740px">worker<span class="u">_</span>manager.py</div><svg width="6" height="10" viewBox="0 0 6 10" style="position:absolute;left:113.5px;top:771px"><path d="M1 0.8 L4.8 4.8 L1 8.8" fill="none" stroke="#9DA0A8" stroke-width="1.1"/></svg><svg width="15" height="13" viewBox="0 0 15 13" style="position:absolute;left:131px;top:770px"><path d="M0.6 2 Q0.6 0.6 2 0.6 H5.9 L7.8 2.5 H12.4 Q13.6 2.5 13.6 3.7 V10.3 Q13.6 11.6 12.4 11.6 H2 Q0.6 11.6 0.6 10.3 Z" fill="#393B40" stroke="#B6B8BD" stroke-width="1.1" stroke-linejoin="round"/><circle cx="5.2" cy="7" r="1.75" fill="none" stroke="#B6B8BD" stroke-width="1"/></svg><div class="tt" style="left:149px;top:764px">model<span class="u">_</span>executor</div><svg width="10" height="6" viewBox="0 0 10 6" style="position:absolute;left:112px;top:797px"><path d="M0.8 1 L4.5 4.6 L8.2 1" fill="none" stroke="#9DA0A8" stroke-width="1.1"/></svg><svg width="15" height="13" viewBox="0 0 15 13" style="position:absolute;left:131px;top:794px"><path d="M0.6 2 Q0.6 0.6 2 0.6 H5.9 L7.8 2.5 H12.4 Q13.6 2.5 13.6 3.7 V10.3 Q13.6 11.6 12.4 11.6 H2 Q0.6 11.6 0.6 10.3 Z" fill="#393B40" stroke="#B6B8BD" stroke-width="1.1" stroke-linejoin="round"/><circle cx="5.2" cy="7" r="1.75" fill="none" stroke="#B6B8BD" stroke-width="1"/></svg><div class="tt" style="left:149px;top:788px">transformers<span class="u">_</span>utils</div><svg width="6" height="10" viewBox="0 0 6 10" style="position:absolute;left:132.5px;top:819px"><path d="M1 0.8 L4.8 4.8 L1 8.8" fill="none" stroke="#9DA0A8" stroke-width="1.1"/></svg><svg width="15" height="13" viewBox="0 0 15 13" style="position:absolute;left:150px;top:818px"><path d="M0.6 2 Q0.6 0.6 2 0.6 H5.9 L7.8 2.5 H12.4 Q13.6 2.5 13.6 3.7 V10.3 Q13.6 11.6 12.4 11.6 H2 Q0.6 11.6 0.6 10.3 Z" fill="#393B40" stroke="#B6B8BD" stroke-width="1.1" stroke-linejoin="round"/><circle cx="5.2" cy="7" r="1.75" fill="none" stroke="#B6B8BD" stroke-width="1"/></svg><div class="tt" style="left:168px;top:812px">configs</div>
    </div>
  </div>
  <div class="abs" style="left:59px;top:58px;width:461px;height:1px;background:#1E1F22"></div>
  <!-- header -->
  <svg class="abs" style="left:70px;top:30px" width="30" height="17" viewBox="0 0 30 17"><g fill="none" stroke="#DFE1E5" stroke-width="1.5"><path d="M1.3 3.2H6M3.7 3.2V11.4M1.3 12.2L6 10.6"/><path d="M7 2.7H14.8M7.7 3.6V11.2M13.3 3.6V11.2M7.7 4.3H13.3M10.5 5.6V10.3Q10.2 12.9 6.4 14.4M11.4 11.8L14.6 14.3"/><path d="M17.9 2.8H26.3V14.3H17.9ZM17.9 6H26.3M17.9 9.6H26.3" stroke-width="1.4"/></g></svg>
  <svg class="abs" style="left:105px;top:36px" width="10" height="7" viewBox="0 0 10 7"><path d="M1 1.3L5 5L9 1.3" fill="none" stroke="#9599A0" stroke-width="1.05"/></svg>
  <svg class="abs" style="left:386px;top:29px" width="18" height="18" viewBox="0 0 18 18"><g fill="none" stroke="#CED0D6" stroke-width="1.1"><circle cx="9" cy="9" r="6.6"/><path d="M9 2.4V5.4M9 12.6V15.6M2.4 9H5.4M12.6 9H15.6"/></g></svg>
  <svg class="abs" style="left:415px;top:30px" width="12" height="16" viewBox="0 0 12 16"><path d="M2 6L6 2.4L10 6M2 10L6 13.6L10 10" fill="none" stroke="#CED0D6" stroke-width="1.1"/></svg>
  <svg class="abs" style="left:441px;top:30px" width="12" height="16" viewBox="0 0 12 16"><path d="M2 2.4L6 6L10 2.4M2 13.6L6 10L10 13.6" fill="none" stroke="#CED0D6" stroke-width="1.1"/></svg>
  <svg class="abs" style="left:469px;top:30px" width="8" height="16" viewBox="0 0 8 16"><g fill="#CED0D6"><rect x="3" y="2" width="2" height="2"/><rect x="3" y="7" width="2" height="2"/><rect x="3" y="12" width="2" height="2"/></g></svg>
  <div class="abs" style="left:493px;top:37px;width:13px;height:1.2px;background:#CED0D6"></div>
</div>
</body></html>
